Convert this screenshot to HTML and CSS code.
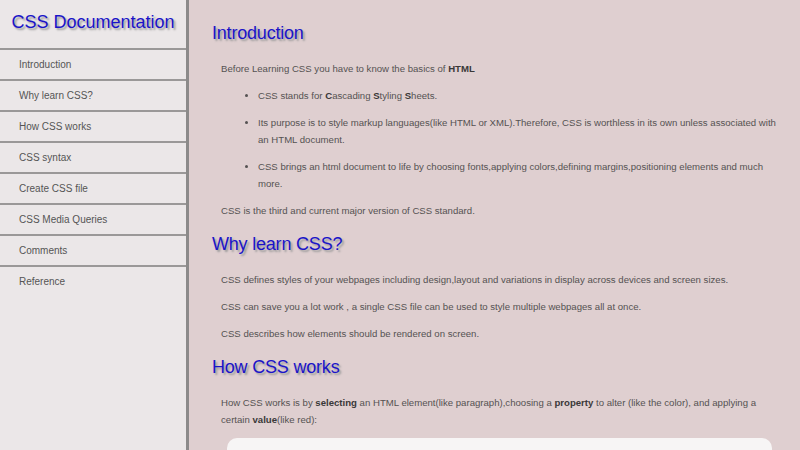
FILE: index.html
```html
<!DOCTYPE html>
<html>
<head>
<meta charset="utf-8">
<link rel="stylesheet" href="styles.css">
</head>
<body>
<div class="page">
  <nav class="sidebar">
    <header class="brand">CSS Documentation</header>
    <ul class="nav">
      <li><a>Introduction</a></li>
      <li><a>Why learn CSS?</a></li>
      <li><a>How CSS works</a></li>
      <li><a>CSS syntax</a></li>
      <li><a>Create CSS file</a></li>
      <li><a>CSS Media Queries</a></li>
      <li><a>Comments</a></li>
      <li><a>Reference</a></li>
    </ul>
  </nav>
  <main class="main">
    <section class="sec">
      <h1>Introduction</h1>
      <p>Before Learning CSS you have to know the basics of <b>HTML</b></p>
      <ul class="list">
        <li>CSS stands for <b>C</b>ascading <b>S</b>tyling <b>S</b>heets.</li>
        <li>Its purpose is to style markup languages(like HTML or XML).Therefore, CSS is worthless in its own unless associated with an HTML document.</li>
        <li>CSS brings an html document to life by choosing fonts,applying colors,defining margins,positioning elements and much more.</li>
      </ul>
      <p>CSS is the third and current major version of CSS standard.</p>
    </section>
    <section class="sec">
      <h1>Why learn CSS?</h1>
      <p>CSS defines styles of your webpages including design,layout and variations in display across devices and screen sizes.</p>
      <p>CSS can save you a lot work , a single CSS file can be used to style multiple webpages all at once.</p>
      <p>CSS describes how elements should be rendered on screen.</p>
    </section>
    <section class="sec">
      <h1>How CSS works</h1>
      <p>How CSS works is by <b>selecting</b> an HTML element(like paragraph),choosing a <b>property</b> to alter (like the color), and applying a certain <b>value</b>(like red):</p>
      <div class="code"></div>
    </section>
  </main>
</div>
</body>
</html>
```
FILE: styles.css
```css
html, body {
  margin: 0;
  padding: 0;
  height: 100%;
  overflow: hidden;
}
body {
  font-family: "Liberation Sans", Arial, sans-serif;
  color: #555252;
  background: #dfcfd0;
}
.page {
  display: flex;
  height: 450px;
}
.sidebar {
  width: 186px;
  flex: none;
  background: #ebe7e8;
  border-right: 3px solid #8c8a8a;
}
.brand {
  height: 48px;
  box-sizing: border-box;
  padding-top: 11px;
  text-align: center;
  font-size: 18px;
  line-height: 22px;
  color: #1a14c8;
  text-shadow: 2px 2px 2px #9a9a9a;
}
.nav {
  list-style: none;
  margin: 0;
  padding: 0;
}
.nav li {
  height: 29px;
  line-height: 29px;
  padding-left: 19px;
  font-size: 10px;
  color: #555;
  border-top: 2px solid #9a9898;
}
.main {
  flex: 1;
  padding: 8px 19px 0 23px;
  overflow: hidden;
}
.sec h1 {
  margin: 15px 0 16px;
  font-size: 18px;
  line-height: 21px;
  font-weight: normal;
  color: #1a14c8;
  text-shadow: 2px 2px 2px #9a9a9a;
  letter-spacing: -0.2px;
}
.sec p {
  margin: 0 0 10px 9px;
  font-size: 9.6px;
  line-height: 17px;
}
.sec b {
  color: #3a3838;
}
.list {
  margin: 0 0 10px 9px;
  padding-left: 37px;
  font-size: 9.6px;
  line-height: 17px;
}
.list li {
  margin-bottom: 10px;
}
.code {
  margin: 0 9px 0 15px;
  background: #f7f5f5;
  border-radius: 10px;
  height: 80px;
}
```
